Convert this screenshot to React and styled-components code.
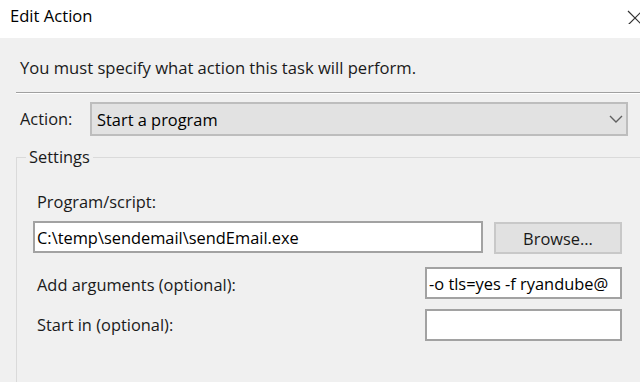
import React from "react";
import styled, { createGlobalStyle } from "styled-components";

const GlobalStyle = createGlobalStyle`
  html, body {
    margin: 0;
    padding: 0;
    background: #f0f0f0;
  }
  body {
    width: 640px;
    height: 382px;
    overflow: hidden;
    font-family: "Open Sans", "Noto Sans", sans-serif;
    font-size: 16.4px;
    color: #1a1a1a;
  }
  * {
    box-sizing: border-box;
  }
`;

const App = () => {
  return (
    <>
      <GlobalStyle />
      <Dialog>
        <TitleBar>
          <Title>Edit Action</Title>
          <CloseButton aria-label="Close">
            <svg width="16" height="16" viewBox="0 0 16 16">
              <path d="M1 1 L15 15 M15 1 L1 15" stroke="#333" strokeWidth="1.2" fill="none" />
            </svg>
          </CloseButton>
        </TitleBar>

        <Body>
          <Instruction>You must specify what action this task will perform.</Instruction>
          <Separator />

          <ActionRow>
            <ActionLabel>Action:</ActionLabel>
            <Select>
              <span>Start a program</span>
              <svg width="14" height="8" viewBox="0 0 14 8">
                <path d="M1 1 L7 7 L13 1" stroke="#606060" strokeWidth="1.4" fill="none" />
              </svg>
            </Select>
          </ActionRow>

          <Settings>
            <Legend>Settings</Legend>
            <FieldLabel>Program/script:</FieldLabel>
            <ProgramRow>
              <TextBox value="C:\temp\sendemail\sendEmail.exe" readOnly />
              <Button>Browse...</Button>
            </ProgramRow>
            <OptionRow $top={13}>
              <FieldLabel $shift={4}>Add arguments (optional):</FieldLabel>
              <TextBox $width={197} value="-o tls=yes -f ryandube@" readOnly />
            </OptionRow>
            <OptionRow $top={10}>
              <FieldLabel>Start in (optional):</FieldLabel>
              <TextBox $width={197} value="" readOnly />
            </OptionRow>
          </Settings>
        </Body>
      </Dialog>
    </>
  );
};

export default App;

const Dialog = styled.div`
  width: 640px;
  height: 382px;
  overflow: hidden;
  background: #f0f0f0;
`;

const TitleBar = styled.div`
  height: 38px;
  background: #ffffff;
  display: flex;
  align-items: flex-start;
  justify-content: space-between;
  padding: 6px 0 0 10px;
`;

const Title = styled.span`
  font-size: 16.6px;
  line-height: 20px;
  color: #000;
`;

const CloseButton = styled.div`
  width: 13px;
  height: 16px;
  margin-top: 2px;
  overflow: hidden;
  flex: none;
`;

const Body = styled.div`
  padding-top: 20px;
`;

const Instruction = styled.div`
  padding-left: 20px;
  line-height: 20px;
  font-size: 16.6px;
  color: #1a1a1a;
  padding-bottom: 14px;
`;

const Separator = styled.div`
  margin-left: 16px;
  border-top: 1px solid #a0a0a0;
  border-bottom: 1px solid #ffffff;
`;

const ActionRow = styled.div`
  display: flex;
  align-items: center;
  margin-top: 8px;
  padding-left: 20px;
`;

const ActionLabel = styled.span`
  width: 70px;
  line-height: 20px;
`;

const Select = styled.div`
  width: 538px;
  height: 34px;
  display: flex;
  align-items: center;
  justify-content: space-between;
  padding: 0 3px 0 5px;
  background: #e2e2e2;
  border: 2px solid #bdbdbd;
  color: #000;
`;

const Settings = styled.fieldset`
  margin: 11px -20px 0 16px;
  padding: 25px 37px 60px 16px;
  border: 1px solid #dadada;
  min-width: 0;
`;

const Legend = styled.legend`
  margin-left: -7px;
  padding: 0 3px;
  line-height: 20px;
`;

const FieldLabel = styled.div`
  line-height: 20px;
  padding-left: 4px;
  padding-top: ${(p) => p.$shift || 0}px;
`;

const ProgramRow = styled.div`
  display: flex;
  align-items: center;
  gap: 11px;
  margin-top: 8px;
`;

const TextBox = styled.input`
  flex: ${(p) => (p.$width ? "none" : "1")};
  width: ${(p) => (p.$width ? `${p.$width}px` : "auto")};
  height: 32px;
  min-width: 0;
  padding: 0 2px;
  border: 2px solid #a2a2a2;
  background: #ffffff;
  font-family: inherit;
  font-size: 16.4px;
  color: #000;
  outline: none;
`;

const Button = styled.button`
  width: 128px;
  height: 32px;
  margin-top: 2px;
  background: #e1e1e1;
  border: 2px solid #c8c8c8;
  font-family: inherit;
  font-size: 16.4px;
  color: #1a1a1a;
  padding: 0;
`;

const OptionRow = styled.div`
  display: flex;
  align-items: center;
  justify-content: space-between;
  margin-top: ${(p) => p.$top}px;
`;
